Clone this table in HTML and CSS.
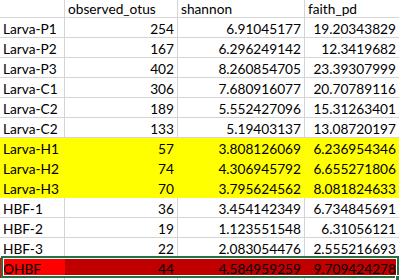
FILE: index.html
```html
<!DOCTYPE html>
<html>
<head>
<meta charset="utf-8">
<link rel="stylesheet" href="styles.css">
</head>
<body>
<div class="sheet">
<table class="grid">
<colgroup><col class="c1"><col class="c2"><col class="c3"><col class="c4"></colgroup>
<tr class="head"><td></td><td class="txt">observed_otus</td><td class="txt">shannon</td><td class="txt">faith_pd</td></tr>
<tr><td class="txt">Larva-P1</td><td>254</td><td>6.91045177</td><td>19.20343829</td></tr>
<tr><td class="txt">Larva-P2</td><td>167</td><td>6.296249142</td><td>12.3419682</td></tr>
<tr><td class="txt">Larva-P3</td><td>402</td><td>8.260854705</td><td>23.39307999</td></tr>
<tr><td class="txt">Larva-C1</td><td>306</td><td>7.680916077</td><td>20.70789116</td></tr>
<tr><td class="txt">Larva-C2</td><td>189</td><td>5.552427096</td><td>15.31263401</td></tr>
<tr><td class="txt">Larva-C2</td><td>133</td><td>5.19403137</td><td>13.08720197</td></tr>
<tr class="yellow"><td class="txt">Larva-H1</td><td>57</td><td>3.808126069</td><td>6.236954346</td></tr>
<tr class="yellow"><td class="txt">Larva-H2</td><td>74</td><td>4.306945792</td><td>6.655271806</td></tr>
<tr class="yellow"><td class="txt">Larva-H3</td><td>70</td><td>3.795624562</td><td>8.081824633</td></tr>
<tr><td class="txt">HBF-1</td><td>36</td><td>3.454142349</td><td>6.734845691</td></tr>
<tr><td class="txt">HBF-2</td><td>19</td><td>1.123551548</td><td>6.31056121</td></tr>
<tr><td class="txt">HBF-3</td><td>22</td><td>2.083054476</td><td>2.555216693</td></tr>
<tr class="red"><td class="txt bright">OHBF</td><td>44</td><td>4.584959259</td><td>9.709424278</td></tr>
<tr class="extra"><td></td><td></td><td></td><td></td></tr>
</table>
<div class="selection"></div>
<div class="handle"></div>
</div>
</body>
</html>
```

FILE: styles.css
```css
html, body {
  margin: 0;
  padding: 0;
  background: #ffffff;
  overflow: hidden;
}
.sheet {
  position: relative;
  width: 399px;
  height: 280px;
  overflow: hidden;
}
.grid {
  border-collapse: separate;
  border-spacing: 0;
  table-layout: fixed;
  width: 400px;
  font-family: Lato, "Liberation Sans", sans-serif;
  font-size: 13.7px;
  color: #000;
}
.c1 { width: 65px; }
.c2 { width: 113px; }
.c3 { width: 127px; }
.c4 { width: 95px; }
.grid td {
  padding: 0 3px 1px 3px;
  box-sizing: border-box;
  height: 20px;
  border-right: 1px solid #d4d4d4;
  border-bottom: 1px solid #d4d4d4;
  text-align: right;
  vertical-align: bottom;
  line-height: 15px;
  white-space: nowrap;
  overflow: hidden;
}
.grid td.txt { text-align: left; }
.grid tr.head td { height: 18px; }
.grid tr.yellow td {
  background: #ffff00;
  border-color: #ffff00;
}
.grid tr.red td {
  background: #c00000;
  border-color: #c00000;
}
.grid tr.red td.bright {
  background: #ff0000;
  border-color: #ff0000;
}
.selection {
  position: absolute;
  left: 1px;
  top: 256px;
  width: 398px;
  height: 22px;
  box-sizing: border-box;
  border: 2px solid #217346;
  box-shadow: inset 0 0 0 1px #ffffff;
}
.handle {
  position: absolute;
  left: 395px;
  top: 275px;
  width: 5px;
  height: 5px;
  background: #217346;
  border-left: 1px solid #fff;
  border-top: 1px solid #fff;
}
```
